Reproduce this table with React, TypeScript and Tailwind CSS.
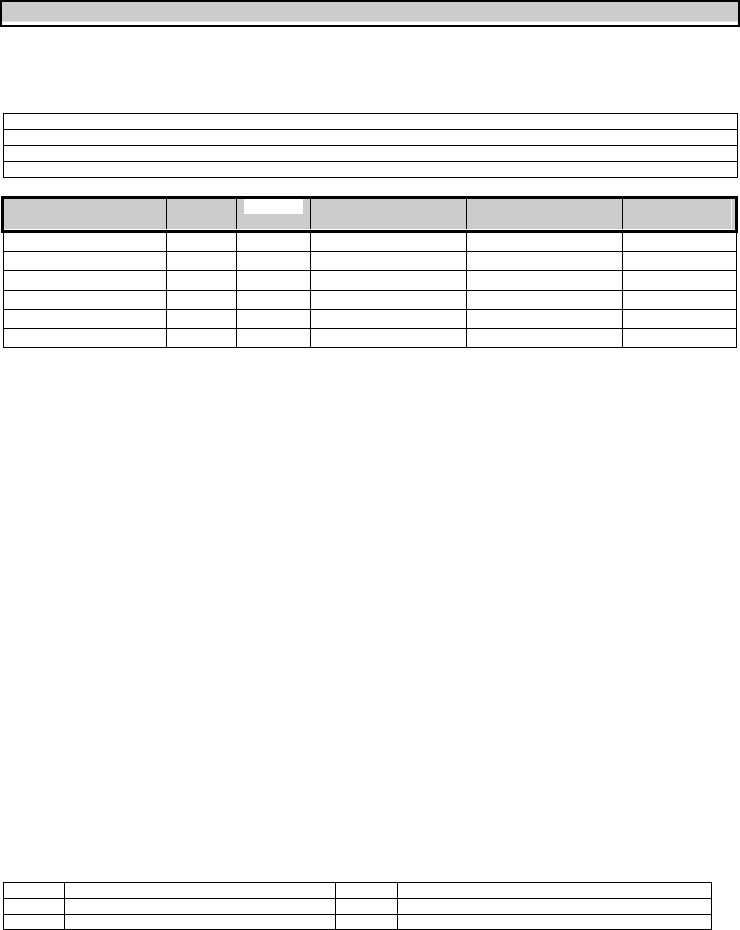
const cols = "grid grid-cols-[163px_70px_74px_156px_156px_1fr]";

function InfoTable() {
  return (
    <div className="mt-[86px] ml-[3px] w-[735px] border-x border-t border-black">
      {[0, 1, 2, 3].map((i) => (
        <div key={i} className="h-[16px] border-b border-black" />
      ))}
    </div>
  );
}

function MainTable() {
  const rowHeights = ["h-[19px]", "h-[19px]", "h-[20px]", "h-[19px]", "h-[19px]", "h-[19px]"];
  return (
    <div className="mt-[18px]">
      {/* header */}
      <div className="ml-[1px] w-[737px] h-[37px] border-[3px] border-black bg-[#cccccc]">
        <div className={`${cols} h-full border-b border-white`}>
          <div className="border-r border-black" />
          <div className="border-r border-black" />
          <div className="border-r border-black">
            <div className="ml-[7px] mt-[0px] w-[59px] h-[15px] bg-white" />
          </div>
          <div className="border-r border-black" />
          <div className="border-r border-black" />
          <div className="border-r border-[#eeeeee] mr-[3px]" />
        </div>
      </div>
      {/* body */}
      <div className="ml-[3px] w-[734px] border-x border-black">
        {rowHeights.map((h, i) => (
          <div key={i} className={`${cols} ${h} border-b border-black`}>
            <div className="border-r border-black" />
            <div className="border-r border-black" />
            <div className="border-r border-black" />
            <div className="border-r border-black" />
            <div className="border-r border-black" />
            <div />
          </div>
        ))}
      </div>
    </div>
  );
}

function FooterTable() {
  const heights = ["h-[16px]", "h-[16px]", "h-[15px]"];
  return (
    <div className="mt-[534px] ml-[3px] w-[709px] border-l border-t border-black">
      {heights.map((h, i) => (
        <div
          key={i}
          className={`grid grid-cols-[61px_271px_62px_314px] ${h} border-b border-black`}
        >
          <div className="border-r border-black" />
          <div className="border-r border-black" />
          <div className="border-r border-black" />
          <div className="border-r border-black" />
        </div>
      ))}
    </div>
  );
}

export default function App() {
  return (
    <div className="w-[740px] h-[930px] bg-white overflow-hidden font-['Liberation_Sans',Arial,sans-serif]">
      {/* title bar */}
      <div className="w-[740px] h-[27px] border-2 border-black">
        <div className="h-[20px] bg-[#cccccc] border-b border-[#dedede]" />
        <div className="h-[2px] bg-white" />
      </div>

      <InfoTable />
      <MainTable />
      <FooterTable />
    </div>
  );
}
